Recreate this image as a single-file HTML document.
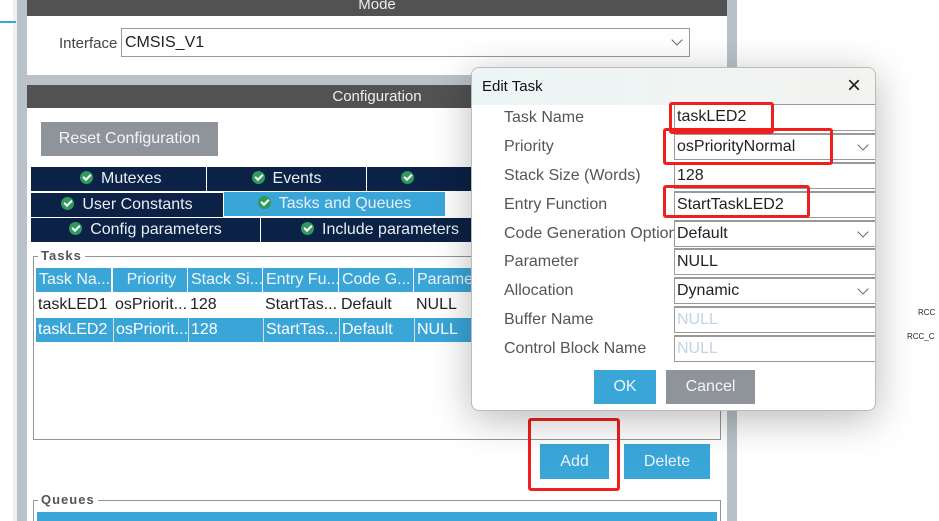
<!DOCTYPE html>
<html><head><meta charset="utf-8"><style>
*{margin:0;padding:0;box-sizing:border-box}
body{width:939px;height:521px;overflow:hidden;background:#fff;position:relative;font-family:"Liberation Sans",sans-serif;font-size:15px;color:#222}
.a{position:absolute}
.hdr{background:#525252;color:#eee;text-align:center;font-size:15px}
.tab{background:#0b2145;color:#e8eef4;text-align:center;font-size:16px;line-height:24px;border-right:1px solid #fff;white-space:nowrap;overflow:hidden}
.ck{display:inline-block;width:13px;height:13px;border-radius:50%;background:#2f9a5c;vertical-align:-1px;margin-right:8px;position:relative}
.ck:after{content:"";position:absolute;left:3px;top:3px;width:6px;height:3px;border-left:2px solid #fff;border-bottom:2px solid #fff;transform:rotate(-45deg)}
.th{background:#3aa6d8;color:#f0f6fa;line-height:24px;padding-left:3px;white-space:nowrap;overflow:hidden;font-size:16px}
.td{line-height:24px;padding-left:2px;white-space:nowrap;overflow:hidden;font-size:16px}
.lbl{position:absolute;left:32px;color:#555;font-size:16px}
.inp{position:absolute;left:202px;width:202px;height:27px;border:1px solid #999;border-top-width:2px;background:#fff;font-size:16px;padding-left:2px;line-height:24px;color:#222}
.chev{position:absolute;right:8px;top:6px;width:8px;height:8px;border-right:1.5px solid #666;border-bottom:1.5px solid #666;transform:rotate(45deg)}
.red{position:absolute;border:3px solid #f01e1e;border-radius:3px}
</style></head><body>
<div class="a" style="left:13px;top:0;width:4px;height:521px;background:#f0f0f0"></div>
<div class="a" style="left:0;top:21px;width:16px;height:2px;background:#3aa6d8"></div>
<div class="a" style="left:17px;top:0;width:10px;height:521px;background:#b8c2c8"></div>
<div class="a" style="left:727px;top:0;width:10px;height:521px;background:#b8c2c8"></div>
<div class="a" style="left:27px;top:75px;width:700px;height:10px;background:#b8c2c8"></div>
<div class="a hdr" style="left:27px;top:0;width:700px;height:16px;line-height:10px">Mode</div>
<div class="a" style="left:59px;top:35px;color:#444;font-size:15px">Interface</div>
<div class="a" style="left:121px;top:28px;width:569px;height:29px;border:1px solid #999;padding-left:3px;line-height:28px;font-size:16px">CMSIS_V1<div class="chev" style="top:7px"></div></div>
<div class="a hdr" style="left:27px;top:85px;width:700px;height:23px;line-height:23px">Configuration</div>
<div class="a" style="left:41px;top:122px;width:177px;height:34px;background:#8e949a;color:#f4f4f4;text-align:center;line-height:34px;font-size:16px">Reset Configuration</div>
<div class="a tab" style="left:31px;top:167px;width:176px">&nbsp;<span class="ck"></span>Mutexes</div>
<div class="a tab" style="left:207px;top:167px;width:160px"><span class="ck"></span>Events</div>
<div class="a tab" style="left:367px;top:167px;width:360px"><span class="ck" style="margin-left:-270px"></span></div>
<div class="a tab" style="left:31px;top:192px;width:193px;border-top:1px solid #fff"><span class="ck"></span>User Constants</div>
<div class="a tab" style="left:224px;top:192px;width:222px;background:#3aa6d8"><span class="ck"></span>Tasks and Queues</div>
<div class="a tab" style="left:446px;top:192px;width:281px"></div>
<div class="a tab" style="left:31px;top:217px;width:230px;border-top:1px solid #fff;height:25px"><span class="ck"></span>Config parameters</div>
<div class="a tab" style="left:261px;top:217px;width:466px;height:25px;border-top:1px solid #fff;text-align:left;padding-left:40px"><span class="ck"></span>Include parameters</div>
<div class="a" style="left:33px;top:256px;width:688px;height:184px;border:1px solid #8e969c"></div>
<div class="a" style="left:38px;top:248px;background:#fff;padding:0 3px;color:#555;font-weight:bold;font-size:13px;letter-spacing:1px">Tasks</div>
<div class="a" style="left:36px;top:268px;width:690px;height:74px">
<div class="a th" style="left:0;width:75px">Task Na...</div><div class="a th" style="left:77px;width:74px;text-align:center">Priority</div><div class="a th" style="left:152px;width:74px">Stack Si...</div><div class="a th" style="left:227px;width:75px">Entry Fu...</div><div class="a th" style="left:303px;width:74px">Code G...</div><div class="a th" style="left:378px;width:300px">Parameter</div>
<div class="a td" style="top:25px;left:0;width:76px">taskLED1</div><div class="a td" style="top:25px;left:77px;width:74px">osPriorit...</div><div class="a td" style="top:25px;left:152px">128</div><div class="a td" style="top:25px;left:227px;width:75px">StartTas...</div><div class="a td" style="top:25px;left:303px">Default</div><div class="a td" style="top:25px;left:378px">NULL</div>
<div class="a" style="top:50px;left:0;width:690px;height:24px;background:#3aa6d8"></div>
<div class="a td" style="top:50px;left:0;width:76px;color:#fff">taskLED2</div><div class="a td" style="top:50px;left:77px;width:74px;color:#fff;border-left:1px solid #ddd">osPriorit...</div><div class="a td" style="top:50px;left:152px;color:#fff;border-left:1px solid #ddd">128</div><div class="a td" style="top:50px;left:227px;width:75px;color:#fff;border-left:1px solid #ddd">StartTas...</div><div class="a td" style="top:50px;left:303px;color:#fff;border-left:1px solid #ddd">Default</div><div class="a td" style="top:50px;left:378px;color:#fff;border-left:1px solid #ddd">NULL</div>
</div>
<div class="a" style="left:540px;top:444px;width:69px;height:35px;background:#3aa6d8;color:#eaf4fa;text-align:center;line-height:35px;font-size:16px">Add</div>
<div class="a" style="left:624px;top:444px;width:86px;height:35px;background:#3aa6d8;color:#eaf4fa;text-align:center;line-height:35px;font-size:16px">Delete</div>
<div class="red" style="left:528px;top:418px;width:92px;height:73px"></div>
<div class="a" style="left:33px;top:500px;width:688px;height:21px;border:1px solid #8e969c;border-bottom:none"></div>
<div class="a" style="left:38px;top:492px;background:#fff;padding:0 3px;color:#555;font-weight:bold;font-size:13px;letter-spacing:1px">Queues</div>
<div class="a" style="left:37px;top:512px;width:680px;height:9px;background:#3aa6d8"></div>
<div class="a" style="left:918px;top:308px;font-size:8px;color:#222">RCC</div>
<div class="a" style="left:907px;top:332px;font-size:8px;color:#222">RCC_C</div>
<div class="a" style="left:471px;top:67px;width:405px;height:344px;border:1px solid #bbb;border-radius:8px;background:#fff;box-shadow:0 8px 40px rgba(0,0,0,0.28);overflow:hidden">
<div class="a" style="left:0;top:0;width:405px;height:37px;background:linear-gradient(90deg,#ecf5f6,#f3f3f0)"></div>
<div class="a" style="left:10px;top:10px;font-size:15px;color:#111">Edit Task</div>
<div class="a" style="left:375px;top:4px;font-size:24px;color:#222;font-weight:300">×</div>
<div class="lbl" style="top:41px">Task Name</div><div class="inp" style="top:36px;border-top-width:1px">taskLED2</div>
<div class="lbl" style="top:70px">Priority</div><div class="inp" style="top:65px">osPriorityNormal<div class="chev"></div></div>
<div class="lbl" style="top:99px">Stack Size (Words)</div><div class="inp" style="top:94px">128</div>
<div class="lbl" style="top:128px">Entry Function</div><div class="inp" style="top:123px">StartTaskLED2</div>
<div class="lbl" style="top:157px">Code Generation Option</div><div class="inp" style="top:152px">Default<div class="chev"></div></div>
<div class="lbl" style="top:185px">Parameter</div><div class="inp" style="top:180px">NULL</div>
<div class="lbl" style="top:214px">Allocation</div><div class="inp" style="top:209px">Dynamic<div class="chev"></div></div>
<div class="lbl" style="top:243px">Buffer Name</div><div class="inp" style="top:238px;color:#c0d4e6">NULL</div>
<div class="lbl" style="top:272px">Control Block Name</div><div class="inp" style="top:267px;color:#c0d4e6">NULL</div>
<div class="a" style="left:122px;top:302px;width:62px;height:34px;background:#3aa6d8;color:#eaf4fa;text-align:center;line-height:34px;font-size:16px">OK</div>
<div class="a" style="left:194px;top:302px;width:89px;height:34px;background:#8e949a;color:#f4f4f4;text-align:center;line-height:34px;font-size:16px">Cancel</div>
</div>
<div class="red" style="left:669px;top:102px;width:105px;height:32px"></div>
<div class="red" style="left:663px;top:128px;width:170px;height:37px"></div>
<div class="red" style="left:663px;top:185px;width:147px;height:33px"></div>
</body></html>
